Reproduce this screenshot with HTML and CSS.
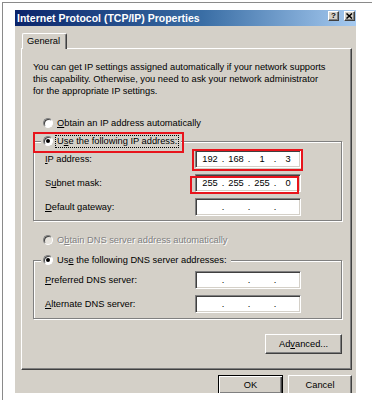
FILE: index.html
```html
<!DOCTYPE html>
<html>
<head>
<meta charset="utf-8">
<link rel="stylesheet" href="styles.css">
</head>
<body>
<div class="page">
  <div class="dialog">
    <div class="titlebar">
      <span class="title">Internet Protocol (TCP/IP) Properties</span>
      <div class="tbtns">
        <span class="tbtn help">?</span>
        <span class="tbtn close"><svg width="7" height="6" viewBox="0 0 7 6"><path d="M0.5 0.5 L6 5.5 M6 0.5 L0.5 5.5" stroke="#000" stroke-width="1.5" fill="none"/></svg></span>
      </div>
    </div>
    <div class="tabrow"><div class="tab">General</div></div>
    <div class="panel">
      <p class="intro">You can get IP settings assigned automatically if your network supports<br>this capability. Otherwise, you need to ask your network administrator<br>for the appropriate IP settings.</p>

      <div class="radio-row r-ip-auto">
        <span class="radio"></span><span class="rlabel"><u>O</u>btain an IP address automatically</span>
      </div>

      <div class="group g-ip">
        <div class="legend">
          <span class="radio on"></span><span class="rlabel focus">U<u>s</u>e the following IP address:</span>
        </div>
        <div class="frow first">
          <span class="flabel"><u>I</u>P address:</span>
          <div class="ip"><span>192</span><i>.</i><span>168</span><i>.</i><span>1</span><i>.</i><span>3</span></div>
        </div>
        <div class="frow">
          <span class="flabel">S<u>u</u>bnet mask:</span>
          <div class="ip"><span>255</span><i>.</i><span>255</span><i>.</i><span>255</span><i>.</i><span>0</span></div>
        </div>
        <div class="frow">
          <span class="flabel"><u>D</u>efault gateway:</span>
          <div class="ip"><span></span><i>.</i><span></span><i>.</i><span></span><i>.</i><span></span></div>
        </div>
      </div>

      <div class="radio-row r-dns-auto disabled">
        <span class="radio off"></span><span class="rlabel">O<u>b</u>tain DNS server address automatically</span>
      </div>

      <div class="group g-dns">
        <div class="legend">
          <span class="radio on"></span><span class="rlabel">Us<u>e</u> the following DNS server addresses:</span>
        </div>
        <div class="frow first">
          <span class="flabel"><u>P</u>referred DNS server:</span>
          <div class="ip"><span></span><i>.</i><span></span><i>.</i><span></span><i>.</i><span></span></div>
        </div>
        <div class="frow">
          <span class="flabel"><u>A</u>lternate DNS server:</span>
          <div class="ip"><span></span><i>.</i><span></span><i>.</i><span></span><i>.</i><span></span></div>
        </div>
      </div>

      <div class="adv-row"><div class="btn adv">Ad<u>v</u>anced...</div></div>
    </div>
    <div class="footer">
      <div class="btn default ok">OK</div>
      <div class="btn cancel">Cancel</div>
    </div>
  </div>
</div>
<div class="mark mark-radio"></div>
<div class="mark mark-ip"></div>
<div class="mark mark-mask"></div>
</body>
</html>
```
FILE: styles.css
```css
html, body {
  margin: 0;
  background: #fff;
}
body {
  position: relative;
  width: 372px;
  height: 400px;
  overflow: hidden;
  font-family: "Liberation Sans", Arial, sans-serif;
  font-size: 9.3px;
  color: #000;
}
u { text-decoration: underline; text-underline-offset: 1px; }

.page {
  margin: 2px 0 0 2px;
  border-top: 1px solid #8a8a8a;
  border-left: 1px solid #8a8a8a;
  height: 398px;
  box-sizing: border-box;
  padding: 7px 0 0 12px;
}

.dialog {
  width: 341px;
  height: 383px;
  background: #d4d0c8;
  overflow: hidden;
  display: flex;
  flex-direction: column;
}

/* title bar */
.titlebar {
  height: 16px;
  flex: none;
  background: linear-gradient(to right, #0a246a 0%, #3a6ea5 55%, #a6caf0 100%);
  display: flex;
  align-items: flex-start;
  padding: 0 1px 0 2px;
}
.title {
  flex: 1;
  color: #fff;
  font-weight: bold;
  font-size: 10.5px;
  line-height: 16px;
  white-space: nowrap;
}
.tbtns {
  display: flex;
  gap: 5px;
  margin-top: 1px;
}
.tbtn {
  width: 11px;
  height: 10px;
  box-sizing: border-box;
  background: #d4d0c8;
  border: 1px solid;
  border-color: #fff #404040 #404040 #fff;
  box-shadow: inset -1px -1px 0 #808080;
  display: flex;
  align-items: center;
  justify-content: center;
  font-weight: bold;
  font-size: 8px;
  line-height: 8px;
}

/* tab */
.tabrow {
  height: 22px;
  flex: none;
  display: flex;
  align-items: flex-end;
  padding-left: 7px;
}
.tab {
  position: relative;
  z-index: 1;
  height: 16px;
  margin-bottom: -1px;
  width: 45px;
  box-sizing: border-box;
  background: #d4d0c8;
  border-top: 1px solid #fff;
  border-left: 1px solid #fff;
  border-right: 1px solid #404040;
  box-shadow: inset -1px 0 0 #808080;
  border-radius: 2px 2px 0 0;
  padding-left: 4px;
  line-height: 14px;
}

/* panel */
.panel {
  flex: none;
  margin-left: 6px;
  width: 331px;
  height: 322px;
  box-sizing: border-box;
  border-top: 1px solid #fff;
  border-left: 1px solid #fff;
  border-right: 1px solid #404040;
  border-bottom: 1px solid #404040;
  box-shadow: inset -1px -1px 0 #808080;
  padding: 12px 9px 0 11px;
}
.intro {
  margin: 0;
  line-height: 12px;
  white-space: nowrap;
}

.radio-row,
.legend {
  display: flex;
  align-items: center;
  height: 12px;
  white-space: nowrap;
}
.radio-row { padding-left: 10px; }
.r-ip-auto { margin-top: 20px; }
.r-dns-auto { margin-top: 13px; }

.radio {
  width: 10px;
  height: 10px;
  box-sizing: border-box;
  border-radius: 50%;
  border: 1px solid;
  border-color: #808080 #fff #fff #808080;
  background: #fff;
  box-shadow: inset 1px 1px 0 #404040;
  position: relative;
  flex: none;
}
.radio.on::after {
  content: "";
  position: absolute;
  left: 2px;
  top: 2px;
  width: 4px;
  height: 4px;
  border-radius: 50%;
  background: #000;
}
.radio.off { background: #e6e3dd; }

.rlabel {
  margin-left: 2px;
  padding: 0 1px;
  border: 1px dotted transparent;
  line-height: 11px;
}
.rlabel.focus { border-color: #000; }
.disabled .rlabel {
  color: #808080;
  text-shadow: 1px 1px 0 #fff;
}

/* group boxes */
.group {
  border: 1px solid #808080;
  box-shadow: 1px 1px 0 #fff, inset 1px 1px 0 #fff;
}
.g-ip { margin-top: 12px; padding-bottom: 4px; }
.g-dns { margin-top: 14px; padding-bottom: 5px; }
.legend {
  margin-top: -7px;
  margin-left: 7px;
  padding: 0 2px;
  width: max-content;
  background: #d4d0c8;
}
.frow {
  display: flex;
  align-items: center;
  height: 18px;
  padding-left: 11px;
  margin-top: 6px;
  white-space: nowrap;
}
.g-ip .frow.first { margin-top: 3px; }
.g-dns .frow.first { margin-top: 5px; }
.flabel { width: 150px; flex: none; }

.ip {
  width: 106px;
  height: 18px;
  box-sizing: border-box;
  background: #fff;
  border: 1px solid;
  border-color: #808080 #fff #fff #808080;
  box-shadow: inset 1px 1px 0 #404040, inset -1px -1px 0 #d4d0c8;
  padding-left: 3px;
  display: grid;
  grid-template-columns: 22px 4px 22px 4px 22px 4px 22px;
  align-items: center;
  line-height: 16px;
}
.ip span, .ip i {
  text-align: center;
  font-style: normal;
}

/* buttons */
.btn {
  height: 20px;
  box-sizing: border-box;
  background: #d4d0c8;
  border: 1px solid;
  border-color: #fff #404040 #404040 #fff;
  box-shadow: inset -1px -1px 0 #808080;
  display: flex;
  align-items: center;
  justify-content: center;
  white-space: nowrap;
}
.btn.default {
  border-color: #000;
  box-shadow: inset 1px 1px 0 #fff, inset -1px -1px 0 #404040, inset -2px -2px 0 #808080;
}
.adv-row {
  display: flex;
  justify-content: flex-end;
  margin-top: 15px;
}
.adv { width: 77px; }

.footer {
  display: flex;
  justify-content: flex-end;
  gap: 5px;
  margin-top: 5px;
  padding-right: 4px;
}
.ok { width: 65px; }
.cancel { width: 64px; }

/* red annotation boxes drawn over the screenshot */
.mark {
  position: absolute;
  box-sizing: border-box;
  border: 2px solid #e8141c;
}
.mark-radio { left: 33px; top: 132px; width: 151px; height: 21px; }
.mark-ip { left: 192px; top: 149px; width: 111px; height: 22px; }
.mark-mask { left: 190px; top: 176px; width: 109px; height: 18px; }
```
